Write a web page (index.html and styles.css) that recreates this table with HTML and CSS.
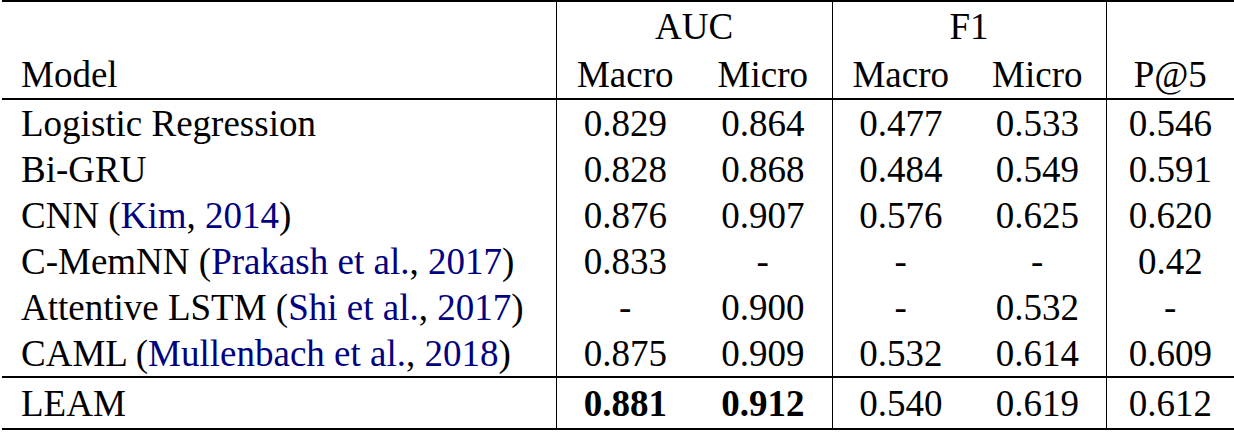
FILE: index.html
```html
<!DOCTYPE html>
<html lang="en">
<head>
    <meta charset="UTF-8">
    <title>Results</title>
    <link rel="stylesheet" href="styles.css">
</head>
<body>
    <table class="results">
        <colgroup>
            <col class="col-model">
            <col class="col-auc">
            <col class="col-auc">
            <col class="col-f1">
            <col class="col-f1">
            <col class="col-p5">
        </colgroup>
        <thead>
            <tr class="head-top">
                <th class="name"></th>
                <th colspan="2" class="sep">AUC</th>
                <th colspan="2" class="sep">F1</th>
                <th class="sep"></th>
            </tr>
            <tr class="head-sub">
                <th class="name">Model</th>
                <th class="sep">Macro</th>
                <th>Micro</th>
                <th class="sep">Macro</th>
                <th>Micro</th>
                <th class="sep">P@5</th>
            </tr>
        </thead>
        <tbody>
            <tr>
                <td class="name">Logistic Regression</td>
                <td class="sep">0.829</td><td>0.864</td>
                <td class="sep">0.477</td><td>0.533</td>
                <td class="sep">0.546</td>
            </tr>
            <tr>
                <td class="name">Bi-GRU</td>
                <td class="sep">0.828</td><td>0.868</td>
                <td class="sep">0.484</td><td>0.549</td>
                <td class="sep">0.591</td>
            </tr>
            <tr>
                <td class="name">CNN (<a class="cite">Kim</a>, <a class="cite">2014</a>)</td>
                <td class="sep">0.876</td><td>0.907</td>
                <td class="sep">0.576</td><td>0.625</td>
                <td class="sep">0.620</td>
            </tr>
            <tr>
                <td class="name">C-MemNN (<a class="cite">Prakash et al.</a>, <a class="cite">2017</a>)</td>
                <td class="sep">0.833</td><td>-</td>
                <td class="sep">-</td><td>-</td>
                <td class="sep">0.42</td>
            </tr>
            <tr>
                <td class="name">Attentive LSTM (<a class="cite">Shi et al.</a>, <a class="cite">2017</a>)</td>
                <td class="sep">-</td><td>0.900</td>
                <td class="sep">-</td><td>0.532</td>
                <td class="sep">-</td>
            </tr>
            <tr>
                <td class="name">CAML (<a class="cite">Mullenbach et al.</a>, <a class="cite">2018</a>)</td>
                <td class="sep">0.875</td><td>0.909</td>
                <td class="sep">0.532</td><td>0.614</td>
                <td class="sep">0.609</td>
            </tr>
        </tbody>
        <tbody class="ours">
            <tr>
                <td class="name">LEAM</td>
                <td class="sep"><b>0.881</b></td><td><b>0.912</b></td>
                <td class="sep">0.540</td><td>0.619</td>
                <td class="sep">0.612</td>
            </tr>
        </tbody>
    </table>
</body>
</html>
```

FILE: styles.css
```css
body {
    margin: 0;
    padding: 0;
    background: #ffffff;
    color: #000000;
}

.results {
    margin: 0 0 0 2px;
    width: 1232px;
    table-layout: fixed;
    border-collapse: collapse;
    border-top: 2px solid #000;
    border-bottom: 2px solid #000;
}

.col-model { width: 554px; }
.col-auc { width: 138px; }
.col-f1 { width: 137px; }
.col-p5 { width: 128px; }

.results th,
.results td {
    padding: 0;
    font-family: "Liberation Serif", "Times New Roman", serif;
    font-size: 37px;
    font-weight: normal;
    text-align: center;
    white-space: nowrap;
}

.results .name {
    text-align: left;
    padding-left: 19px;
}

.results .sep {
    border-left: 1.5px solid #000;
}

.head-top th {
    height: 48px;
    vertical-align: middle;
}

.head-sub th {
    height: 48px;
    border-bottom: 2px solid #000;
}

tbody tr td {
    height: 46px;
}

.ours tr td {
    height: 50px;
    border-top: 2px solid #000;
}

.cite {
    color: #000080;
    text-decoration: none;
}

.results b {
    font-weight: bold;
}
```
